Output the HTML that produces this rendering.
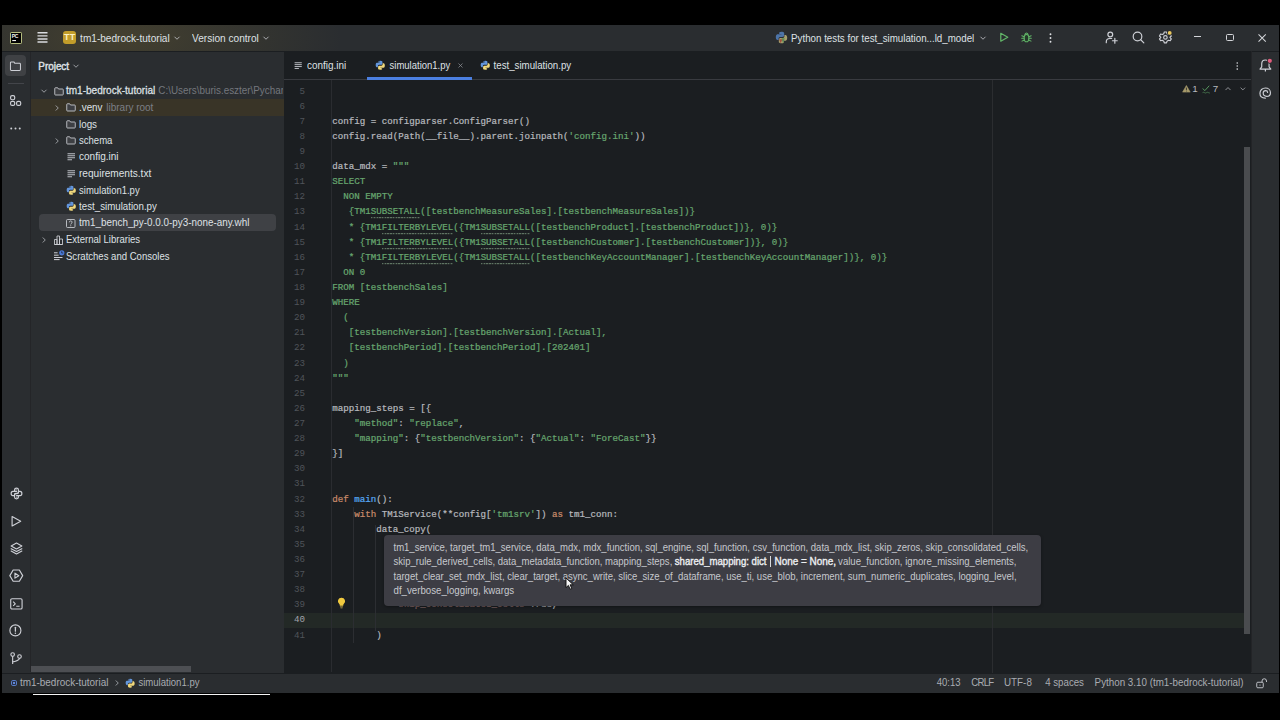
<!DOCTYPE html>
<html><head><meta charset="utf-8">
<style>
*{margin:0;padding:0;box-sizing:border-box}
html,body{width:1280px;height:720px;overflow:hidden;background:#000}
body{position:relative;font-family:"Liberation Sans",sans-serif;font-size:9.8px;color:#dfe1e5}
.a{position:absolute}
.t{position:absolute;white-space:nowrap;line-height:12px}
.cl{position:absolute;left:332.25px;height:15px;line-height:15px;white-space:pre;font-family:"Liberation Mono",monospace;font-size:9.17px;color:#b6b8bd;transform:scaleY(1.06);transform-origin:0 11px;-webkit-text-stroke:0.22px currentColor}
.ln{position:absolute;left:285px;width:20px;text-align:right;height:15px;line-height:15px;font-family:"Liberation Mono",monospace;font-size:9.17px}
.wv{color:#67a66f;padding-bottom:1.6px;background:repeating-linear-gradient(90deg,rgba(130,160,132,.75) 0 1.4px,rgba(130,160,132,.3) 1.4px 2.75px) left bottom/100% 1.2px no-repeat}
.rt{position:absolute;line-height:16.5px;white-space:nowrap;font-size:9.8px;color:#dfe1e5}
svg{position:absolute;overflow:visible}
.sb{position:absolute;top:673px;line-height:19px;white-space:nowrap;font-size:9.8px;color:#a9acb2}
.tp{position:absolute;left:394px;white-space:nowrap;font-size:9.5px;line-height:14.5px;color:#c4c6cc}
</style></head><body>
<!-- window -->
<div class="a" style="left:2px;top:25px;width:1277px;height:668px;background:#2a2d30"></div>
<!-- title bar gradient -->
<div class="a" style="left:2px;top:25px;width:600px;height:26px;background:radial-gradient(ellipse 220px 80px at 120px 13px, rgba(150,125,45,0.24), rgba(150,125,45,0.10) 55%, rgba(150,125,45,0) 100%)"></div>
<!-- left strip border -->
<div class="a" style="left:29.5px;top:51px;width:1px;height:621px;background:#242528"></div>
<!-- title bar bottom border -->
<div class="a" style="left:2px;top:50.5px;width:1277px;height:1px;background:#1b1e21"></div>
<!-- editor -->
<div class="a" style="left:284px;top:51px;width:967px;height:621.5px;background:#1b1e21"></div>
<!-- right strip border -->
<div class="a" style="left:1250.5px;top:51px;width:1px;height:621px;background:#232427"></div>
<!-- tab bar bottom border -->
<div class="a" style="left:284px;top:79px;width:966.5px;height:1px;background:#393b40"></div>
<!-- status bar top border -->
<div class="a" style="left:2px;top:672.5px;width:1277px;height:0.5px;background:#1b1e21"></div>

<!-- ===== TITLE BAR ===== -->
<svg style="left:9.8px;top:31.6px" width="12" height="12" viewBox="0 0 24 24"><rect x="1" y="1" width="22" height="22" rx="1.5" fill="#000" stroke="#c8d18c" stroke-width="1.8"/><text x="3.6" y="11.2" font-family="Liberation Sans" font-weight="bold" font-size="10" letter-spacing="-0.6" fill="#f2f2f2">PC</text><rect x="4.5" y="16" width="7.5" height="2.2" fill="#f2f2f2"/></svg>
<svg style="left:37px;top:32px" width="11" height="11" viewBox="0 0 22 22"><path d="M1 1.6H21M1 7.7H21M1 13.8H21M1 19.9H21" stroke="#dadcdf" stroke-width="2.9"/></svg>
<div class="a" style="left:62.8px;top:30.5px;width:13.6px;height:13.6px;border-radius:3px;background:#c29d2a"></div>
<div class="t" style="left:63px;top:31.3px;width:13.5px;text-align:center;font-size:8.8px;font-weight:bold;color:#fbf0c4;line-height:12px;letter-spacing:0.3px">TT</div>
<div class="t" style="left:80.10px;top:31.70px;line-height:14px;font-size:10.088px;color:#dfe1e5;transform:scaleY(1.06);transform-origin:0 10.50px;">tm1-bedrock-tutorial</div>
<svg style="left:173.5px;top:36px" width="6" height="4" viewBox="0 0 12 8"><path d="M1 1.5L6 6.5L11 1.5" fill="none" stroke="#c0c2c6" stroke-width="1.7"/></svg>
<div class="t" style="left:192.10px;top:31.70px;line-height:14px;font-size:10.099px;color:#dfe1e5;transform:scaleY(1.06);transform-origin:0 10.50px;">Version control</div>
<svg style="left:262.5px;top:36px" width="6" height="4" viewBox="0 0 12 8"><path d="M1 1.5L6 6.5L11 1.5" fill="none" stroke="#c0c2c6" stroke-width="1.7"/></svg>

<svg style="left:775px;top:31px" width="13" height="13" viewBox="0 0 16 16">
<path d="M7.9 1C5 1 5.2 2.3 5.2 2.3V3.7H8V4.1H3.4S1 3.8 1 7.5s2.1 3.6 2.1 3.6H4.4V9.4S4.3 7.3 6.5 7.3H9.2S11.3 7.3 11.3 5.3V2.9S11.6 1 7.9 1Z" fill="#4d74a8"/>
<path d="M8.1 15C11 15 10.8 13.7 10.8 13.7V12.3H8V11.9H12.6S15 12.2 15 8.5S12.9 4.9 12.9 4.9H11.6V6.6S11.7 8.7 9.5 8.7H6.8S4.7 8.7 4.7 10.7V13.1S4.4 15 8.1 15Z" fill="#a79f6e"/>
<path d="M8 9L10 15L12 9Z" fill="#5b8a55"/><path d="M5 10L7 15L9 10Z" fill="#a04f3b"/>
</svg>
<div class="t" style="left:791.10px;top:31.82px;line-height:14px;font-size:9.752px;color:#dfe1e5;transform:scaleY(1.06);transform-origin:0 10.38px;">Python tests for test_simulation...ld_model</div>
<svg style="left:979.5px;top:36px" width="6" height="4" viewBox="0 0 12 8"><path d="M1 1.5L6 6.5L11 1.5" fill="none" stroke="#c0c2c6" stroke-width="1.7"/></svg>
<svg style="left:999px;top:32.2px" width="10" height="10.5" viewBox="0 0 14 15"><path d="M2.4 1.9V13.1L12.4 7.5Z" fill="none" stroke="#62b568" stroke-width="1.75" stroke-linejoin="round"/></svg>
<svg style="left:1021.2px;top:31.8px" width="11" height="10.8" viewBox="0 0 16 15.7"><g fill="none" stroke="#62b568" stroke-width="1.5" stroke-linecap="round"><path d="M8 3.6C5.9 3.6 4.6 5.3 4.6 8.6C4.6 12 6 14.3 8 14.3C10 14.3 11.4 12 11.4 8.6C11.4 5.3 10.1 3.6 8 3.6Z" fill="#24382a"/><path d="M5.6 4.3C5.8 2.3 6.7 1.3 8 1.3C9.3 1.3 10.2 2.3 10.4 4.3"/><path d="M1.2 5.4L4.6 6.8M1 9.2H4.6M1.4 13.3L4.9 11.6M14.8 5.4L11.4 6.8M15 9.2H11.4M14.6 13.3L11.1 11.6"/></g></svg>
<svg style="left:1049px;top:32.5px" width="3" height="10" viewBox="0 0 3 10"><circle cx="1.5" cy="1.3" r="0.95" fill="#dfe1e5"/><circle cx="1.5" cy="5" r="0.95" fill="#dfe1e5"/><circle cx="1.5" cy="8.7" r="0.95" fill="#dfe1e5"/></svg>

<svg style="left:1104.6px;top:31px" width="12.8" height="12.8" viewBox="0 0 16 16"><g fill="none" stroke="#ced0d6" stroke-width="1.5" stroke-linecap="round"><circle cx="6.6" cy="4.4" r="3"/><path d="M1.6 14.6V13.6C1.6 11 3.4 9.4 6 9.4H8.4"/><path d="M12.3 9.2V15.2M9.3 12.2H15.3"/></g></svg>
<svg style="left:1131.6px;top:31.4px" width="12.8" height="12.8" viewBox="0 0 16 16"><g fill="none" stroke="#ced0d6" stroke-width="1.5" stroke-linecap="round"><circle cx="6.9" cy="6.9" r="5.4"/><path d="M10.9 10.9L14.8 14.8"/></g></svg>
<svg style="left:1158.6px;top:31px" width="12.8" height="12.8" viewBox="0 0 16 16"><g fill="none" stroke="#ced0d6" stroke-width="1.45" stroke-linejoin="round"><path d="M6.6 1.2H9.4L10 3.3L11.9 4.4L14 3.8L15.4 6.2L13.8 7.7V8.3L15.4 9.8L14 12.2L11.9 11.6L10 12.7L9.4 14.8H6.6L6 12.7L4.1 11.6L2 12.2L0.6 9.8L2.2 8.3V7.7L0.6 6.2L2 3.8L4.1 4.4L6 3.3Z"/><circle cx="8" cy="8" r="2.2"/></g><circle cx="13.4" cy="2.4" r="3.3" fill="#2b2d30"/><circle cx="13.4" cy="2.4" r="2.4" fill="#e9c75d"/></svg>
<div class="a" style="left:1194px;top:36.4px;width:7.2px;height:1.1px;background:#d3d5d9"></div>
<div class="a" style="left:1226px;top:34px;width:7.8px;height:7.2px;border:1.3px solid #d3d5d9;border-radius:1.5px"></div>
<svg style="left:1258px;top:33.6px" width="8.3" height="7.8" viewBox="0 0 16 15"><path d="M1 0.5L15 14.5M15 0.5L1 14.5" stroke="#d3d5d9" stroke-width="2"/></svg>

<!-- ===== LEFT STRIP ===== -->
<div class="a" style="left:5.3px;top:55.3px;width:20.7px;height:20.7px;border-radius:4px;background:#3f4144"></div>
<svg style="left:9.4px;top:60.6px" width="12.9" height="10" viewBox="0 0 20 17"><path d="M1.5 3V14.5A1.5 1.5 0 0 0 3 16H17A1.5 1.5 0 0 0 18.5 14.5V5.5A1.5 1.5 0 0 0 17 4H9L7.3 1.5H3A1.5 1.5 0 0 0 1.5 3Z" fill="#3d3f43" stroke="#ced0d6" stroke-width="1.7" stroke-linejoin="round"/></svg>
<div class="a" style="left:8px;top:82.6px;width:15.7px;height:1px;background:#43454a"></div>
<svg style="left:10px;top:95px" width="11.5" height="11" viewBox="0 0 23 22"><rect x="1.2" y="1.2" width="8.2" height="8.2" rx="3" fill="none" stroke="#ced0d6" stroke-width="2.3"/><rect x="1.2" y="12.6" width="8.2" height="8.2" rx="3" fill="none" stroke="#ced0d6" stroke-width="2.3"/><rect x="13.2" y="12.6" width="8.2" height="8.2" rx="3" fill="none" stroke="#ced0d6" stroke-width="2.3"/></svg>
<svg style="left:10.2px;top:126.8px" width="11" height="3" viewBox="0 0 22 6"><circle cx="2.5" cy="3" r="2" fill="#ced0d6"/><circle cx="11" cy="3" r="2" fill="#ced0d6"/><circle cx="19.5" cy="3" r="2" fill="#ced0d6"/></svg>

<svg style="left:9.5px;top:487.2px" width="13" height="13" viewBox="0 0 16 16"><g fill="none" stroke="#ced0d6" stroke-width="1.45" stroke-linejoin="round" stroke-linecap="round"><path d="M5.6 5.4V3.6Q5.6 1.4 8 1.4Q10.4 1.4 10.4 3.6V6.4Q10.4 7.9 8.9 7.9H7.1Q5.6 7.9 5.6 9.4V10.6H3.6Q1.4 10.6 1.4 8Q1.4 5.4 3.6 5.4H8"/><path d="M10.4 10.6V12.4Q10.4 14.6 8 14.6Q5.6 14.6 5.6 12.4V9.6Q5.6 8.1 7.1 8.1H8.9Q10.4 8.1 10.4 6.6V5.4H12.4Q14.6 5.4 14.6 8Q14.6 10.6 12.4 10.6H8"/></g><circle cx="7.6" cy="3.5" r="0.8" fill="#ced0d6"/><circle cx="8.4" cy="12.5" r="0.8" fill="#ced0d6"/></svg>
<svg style="left:10px;top:515px" width="12" height="12.5" viewBox="0 0 15 16"><path d="M2.5 2V14L13.5 8Z" fill="none" stroke="#ced0d6" stroke-width="1.45" stroke-linejoin="round"/></svg>
<svg style="left:9.5px;top:542.2px" width="13" height="13" viewBox="0 0 16 16"><g fill="none" stroke="#ced0d6" stroke-width="1.35" stroke-linejoin="round" stroke-linecap="round"><path d="M8 1.3L14.6 5L8 8.7L1.4 5Z"/><path d="M1.4 8.2L8 11.8L14.6 8.2"/><path d="M1.4 11.2L8 14.8L14.6 11.2"/></g></svg>
<svg style="left:8.6px;top:569.4px" width="14.5" height="13.3" viewBox="0 0 17.5 16"><g fill="none" stroke="#ced0d6" stroke-width="1.4" stroke-linejoin="round"><path d="M5 1.2H12.5L16.5 8L12.5 14.8H5L1 8Z"/><path d="M7.2 5V11L11.8 8Z"/></g></svg>
<svg style="left:9.5px;top:597.6px" width="12.8" height="11.8" viewBox="0 0 16 14.7"><g fill="none" stroke="#ced0d6" stroke-width="1.4" stroke-linejoin="round"><rect x="0.9" y="0.9" width="14.2" height="12.9" rx="1.6"/><path d="M4 4.6L6.6 7.2L4 9.8M7.8 10.3H12"/></g></svg>
<svg style="left:9.4px;top:624.4px" width="12.8" height="12.8" viewBox="0 0 16 16"><circle cx="8" cy="8" r="6.9" fill="none" stroke="#ced0d6" stroke-width="1.4"/><path d="M8 4.2V9" stroke="#ced0d6" stroke-width="1.6" stroke-linecap="round"/><circle cx="8" cy="11.5" r="0.95" fill="#ced0d6"/></svg>
<svg style="left:9.5px;top:652px" width="12" height="12.5" viewBox="0 0 15.4 16"><g fill="none" stroke="#ced0d6" stroke-width="1.45"><circle cx="3.4" cy="3.3" r="2.3"/><circle cx="12.2" cy="5.8" r="2.3"/><path d="M3.4 5.6V15.5M12.2 8.1C12.2 11 8 11.5 3.4 13"/></g></svg>

<!-- ===== PROJECT PANEL ===== -->
<div class="t" style="left:38.35px;top:60.08px;line-height:14px;font-size:9.864px;color:#dfe1e5;transform:scaleY(1.06);transform-origin:0 10.42px;-webkit-text-stroke:0.4px currentColor;">Project</div>
<svg style="left:73px;top:64.2px" width="6" height="4" viewBox="0 0 12 8"><path d="M1 1.5L6 6.5L11 1.5" fill="none" stroke="#aeb0b5" stroke-width="1.7"/></svg>
<div class="a" style="left:31px;top:99.25px;width:253px;height:16.5px;background:#393427"></div><div class="a" style="left:39px;top:214.25px;width:237px;height:16.5px;border-radius:4px;background:#3f4145"></div><svg style="left:41.3px;top:89.0px" width="6" height="4" viewBox="0 0 12 8"><path d="M1 1.5L6 6.5L11 1.5" fill="none" stroke="#aeb0b5" stroke-width="1.7"/></svg><svg style="left:53.5px;top:86.75px" width="10" height="8.5" viewBox="0 0 20 17"><path d="M1.5 3V14.5A1.5 1.5 0 0 0 3 16H17A1.5 1.5 0 0 0 18.5 14.5V5.5A1.5 1.5 0 0 0 17 4H9L7.3 1.5H3A1.5 1.5 0 0 0 1.5 3Z" fill="#3d3f43" stroke="#ced0d6" stroke-width="1.7" stroke-linejoin="round"/></svg><div class="t" style="left:65.90px;top:84.41px;line-height:14px;font-size:10.06px;color:#dfe1e5;transform:scaleY(1.06);transform-origin:0 10.49px;-webkit-text-stroke:0.25px currentColor;">tm1-bedrock-tutorial</div><div class="t" style="left:158.35px;top:84.47px;line-height:14px;font-size:9.9px;color:#74777d;transform:scaleY(1.06);transform-origin:0 10.43px;max-width:125px;overflow:hidden;">C:\Users\buris.eszter\PycharmProjects\tm1-bedrock-tutorial</div><svg style="left:55px;top:104.5px" width="4" height="6" viewBox="0 0 8 12"><path d="M1.5 1L6.5 6L1.5 11" fill="none" stroke="#aeb0b5" stroke-width="1.7"/></svg><svg style="left:66.3px;top:103.25px" width="10" height="8.5" viewBox="0 0 20 17"><path d="M1.5 3V14.5A1.5 1.5 0 0 0 3 16H17A1.5 1.5 0 0 0 18.5 14.5V5.5A1.5 1.5 0 0 0 17 4H9L7.3 1.5H3A1.5 1.5 0 0 0 1.5 3Z" fill="#3d3f43" stroke="#ced0d6" stroke-width="1.7" stroke-linejoin="round"/></svg><div class="t" style="left:79.00px;top:100.99px;line-height:14px;font-size:9.833px;color:#dfe1e5;transform:scaleY(1.06);transform-origin:0 10.41px;">.venv</div><div class="t" style="left:106.30px;top:100.94px;line-height:14px;font-size:9.972px;color:#7c7f86;transform:scaleY(1.06);transform-origin:0 10.46px;">library root</div><svg style="left:66.3px;top:119.75px" width="10" height="8.5" viewBox="0 0 20 17"><path d="M1.5 3V14.5A1.5 1.5 0 0 0 3 16H17A1.5 1.5 0 0 0 18.5 14.5V5.5A1.5 1.5 0 0 0 17 4H9L7.3 1.5H3A1.5 1.5 0 0 0 1.5 3Z" fill="#3d3f43" stroke="#ced0d6" stroke-width="1.7" stroke-linejoin="round"/></svg><div class="t" style="left:79.00px;top:117.50px;line-height:14px;font-size:9.813px;color:#dfe1e5;transform:scaleY(1.06);transform-origin:0 10.40px;">logs</div><svg style="left:55px;top:137.5px" width="4" height="6" viewBox="0 0 8 12"><path d="M1.5 1L6.5 6L1.5 11" fill="none" stroke="#aeb0b5" stroke-width="1.7"/></svg><svg style="left:66.3px;top:136.25px" width="10" height="8.5" viewBox="0 0 20 17"><path d="M1.5 3V14.5A1.5 1.5 0 0 0 3 16H17A1.5 1.5 0 0 0 18.5 14.5V5.5A1.5 1.5 0 0 0 17 4H9L7.3 1.5H3A1.5 1.5 0 0 0 1.5 3Z" fill="#3d3f43" stroke="#ced0d6" stroke-width="1.7" stroke-linejoin="round"/></svg><div class="t" style="left:79.00px;top:134.08px;line-height:14px;font-size:9.568px;color:#dfe1e5;transform:scaleY(1.06);transform-origin:0 10.32px;">schema</div><svg style="left:66.8px;top:153.25px" width="8.5" height="7.5" viewBox="0 0 17 15"><g stroke="#ced0d6" stroke-width="1.8"><path d="M1 1.5H16M1 5.5H16M1 9.5H16M1 13.5H10"/></g></svg><div class="t" style="left:79.00px;top:150.42px;line-height:14px;font-size:10.034px;color:#dfe1e5;transform:scaleY(1.06);transform-origin:0 10.48px;">config.ini</div><svg style="left:66.8px;top:169.75px" width="8.5" height="7.5" viewBox="0 0 17 15"><g stroke="#ced0d6" stroke-width="1.8"><path d="M1 1.5H16M1 5.5H16M1 9.5H16M1 13.5H10"/></g></svg><div class="t" style="left:79.00px;top:166.90px;line-height:14px;font-size:10.099px;color:#dfe1e5;transform:scaleY(1.06);transform-origin:0 10.50px;">requirements.txt</div><svg style="left:66.1px;top:184.75px" width="10.5" height="10.5" viewBox="0 0 16 16">
<path d="M7.9 1C5 1 5.2 2.3 5.2 2.3V3.7H8V4.1H3.4S1 3.8 1 7.5s2.1 3.6 2.1 3.6H4.4V9.4S4.3 7.3 6.5 7.3H9.2S11.3 7.3 11.3 5.300V2.9S11.6 1 7.9 1ZM6.4 2A.55.55 0 1 1 6.4 3.1A.55.55 0 1 1 6.4 2Z" fill="#6396dc"/>
<path d="M8.1 15C11 15 10.8 13.7 10.8 13.7V12.3H8V11.9H12.6S15 12.2 15 8.5S12.9 4.9 12.9 4.9H11.6V6.6S11.7 8.7 9.5 8.7H6.8S4.7 8.7 4.7 10.700V13.1S4.4 15 8.1 15ZM9.6 14A.55.55 0 1 1 9.6 12.9A.55.55 0 1 1 9.6 14Z" fill="#f0d87c"/>
</svg><div class="t" style="left:79.10px;top:183.61px;line-height:14px;font-size:9.481px;color:#dfe1e5;transform:scaleY(1.06);transform-origin:0 10.29px;">simulation1.py</div><svg style="left:66.1px;top:201.25px" width="10.5" height="10.5" viewBox="0 0 16 16">
<path d="M7.9 1C5 1 5.2 2.3 5.2 2.3V3.7H8V4.1H3.4S1 3.8 1 7.5s2.1 3.6 2.1 3.6H4.4V9.4S4.3 7.3 6.5 7.3H9.2S11.3 7.3 11.3 5.300V2.9S11.6 1 7.9 1ZM6.4 2A.55.55 0 1 1 6.4 3.1A.55.55 0 1 1 6.4 2Z" fill="#6396dc"/>
<path d="M8.1 15C11 15 10.8 13.7 10.8 13.7V12.3H8V11.9H12.6S15 12.2 15 8.5S12.9 4.9 12.9 4.9H11.6V6.6S11.7 8.7 9.5 8.7H6.8S4.7 8.7 4.7 10.700V13.1S4.4 15 8.1 15ZM9.6 14A.55.55 0 1 1 9.6 12.9A.55.55 0 1 1 9.6 14Z" fill="#f0d87c"/>
</svg><div class="t" style="left:79.10px;top:200.03px;line-height:14px;font-size:9.721px;color:#dfe1e5;transform:scaleY(1.06);transform-origin:0 10.37px;">test_simulation.py</div><svg style="left:66.3px;top:218.5px" width="9.5" height="9" viewBox="0 0 19 18"><rect x="1" y="1" width="17" height="16" rx="2" fill="none" stroke="#ced0d6" stroke-width="1.7"/><path d="M6.8 6.6A2.7 2.7 0 1 1 10.5 9C9.7 9.4 9.5 9.9 9.5 10.8" fill="none" stroke="#ced0d6" stroke-width="1.7"/><circle cx="9.5" cy="13.4" r="1.1" fill="#ced0d6"/></svg><div class="t" style="left:79.10px;top:216.48px;line-height:14px;font-size:9.856px;color:#dfe1e5;transform:scaleY(1.06);transform-origin:0 10.42px;">tm1_bench_py-0.0.0-py3-none-any.whl</div><svg style="left:42px;top:236.5px" width="4" height="6" viewBox="0 0 8 12"><path d="M1.5 1L6.5 6L1.5 11" fill="none" stroke="#aeb0b5" stroke-width="1.7"/></svg><svg style="left:54.0px;top:234.5px" width="9.5" height="10" viewBox="0 0 19 20"><path d="M1 19V9H6V19ZM6 19V2H11V19ZM11 19V8H17V19ZM1 19H17" fill="none" stroke="#ced0d6" stroke-width="1.7" stroke-linejoin="round"/></svg><div class="t" style="left:66.00px;top:233.10px;line-height:14px;font-size:9.536px;color:#dfe1e5;transform:scaleY(1.06);transform-origin:0 10.30px;">External Libraries</div><svg style="left:54px;top:249px" width="11" height="11" viewBox="0 0 11 11"><path d="M0 3.8H3.6M0 6.2H4.6M0 8.5H8.5M0 10.6H5.6" stroke="#ced0d6" stroke-width="1"/><circle cx="7.8" cy="3.8" r="3.1" fill="#2b2d30"/><circle cx="7.8" cy="3.8" r="2.6" fill="#4a7ad8"/><path d="M7.7 2.3V4H9.2" fill="none" stroke="#1e2a45" stroke-width="0.8"/></svg><div class="t" style="left:66.00px;top:249.58px;line-height:14px;font-size:9.568px;color:#dfe1e5;transform:scaleY(1.06);transform-origin:0 10.32px;">Scratches and Consoles</div>
<!-- h scrollbar -->
<div class="a" style="left:31px;top:665.8px;width:160px;height:5.8px;background:#4d4f53;border-radius:0"></div>

<!-- ===== TABS ===== -->
<svg style="left:294px;top:61.8px" width="8.4" height="7.2" viewBox="0 0 17 15"><g stroke="#ced0d6" stroke-width="1.8"><path d="M1 1.5H16M1 5.5H16M1 9.5H16M1 13.5H10"/></g></svg>
<div class="t" style="left:307.10px;top:58.96px;line-height:14px;font-size:9.933px;color:#dfe1e5;transform:scaleY(1.06);transform-origin:0 10.44px;">config.ini</div>
<svg style="left:375.3px;top:60.2px" width="10.5" height="10.5" viewBox="0 0 16 16">
<path d="M7.9 1C5 1 5.2 2.3 5.2 2.3V3.7H8V4.1H3.4S1 3.8 1 7.5s2.1 3.6 2.1 3.6H4.4V9.4S4.3 7.3 6.5 7.3H9.2S11.3 7.3 11.3 5.300V2.9S11.6 1 7.9 1ZM6.4 2A.55.55 0 1 1 6.4 3.1A.55.55 0 1 1 6.4 2Z" fill="#6396dc"/>
<path d="M8.1 15C11 15 10.8 13.7 10.8 13.7V12.3H8V11.9H12.6S15 12.2 15 8.5S12.9 4.9 12.9 4.9H11.6V6.6S11.7 8.7 9.5 8.7H6.8S4.7 8.7 4.7 10.700V13.1S4.4 15 8.1 15ZM9.6 14A.55.55 0 1 1 9.6 12.9A.55.55 0 1 1 9.6 14Z" fill="#f0d87c"/>
</svg>
<div class="t" style="left:389.60px;top:59.11px;line-height:14px;font-size:9.497px;color:#dfe1e5;transform:scaleY(1.06);transform-origin:0 10.29px;">simulation1.py</div>
<svg style="left:458.4px;top:63.2px" width="5" height="5" viewBox="0 0 10 10"><path d="M1 1L9 9M9 1L1 9" stroke="#8c8f94" stroke-width="1.5"/></svg>
<div class="a" style="left:367px;top:77px;width:105px;height:3px;background:#4b7fe0"></div>
<svg style="left:480px;top:60.2px" width="10.5" height="10.5" viewBox="0 0 16 16">
<path d="M7.9 1C5 1 5.2 2.3 5.2 2.3V3.7H8V4.1H3.4S1 3.8 1 7.5s2.1 3.6 2.1 3.6H4.4V9.4S4.3 7.3 6.5 7.3H9.2S11.3 7.3 11.3 5.300V2.9S11.6 1 7.9 1ZM6.4 2A.55.55 0 1 1 6.4 3.1A.55.55 0 1 1 6.4 2Z" fill="#6396dc"/>
<path d="M8.1 15C11 15 10.8 13.7 10.8 13.7V12.3H8V11.9H12.6S15 12.2 15 8.5S12.9 4.9 12.9 4.9H11.6V6.6S11.7 8.7 9.5 8.7H6.8S4.7 8.7 4.7 10.700V13.1S4.4 15 8.1 15ZM9.6 14A.55.55 0 1 1 9.6 12.9A.55.55 0 1 1 9.6 14Z" fill="#f0d87c"/>
</svg>
<div class="t" style="left:493.60px;top:59.04px;line-height:14px;font-size:9.696px;color:#dfe1e5;transform:scaleY(1.06);transform-origin:0 10.36px;">test_simulation.py</div>
<svg style="left:1236.3px;top:60.8px" width="2.5" height="10" viewBox="0 0 3 10"><circle cx="1.5" cy="1.3" r="0.95" fill="#dfe1e5"/><circle cx="1.5" cy="5" r="0.95" fill="#dfe1e5"/><circle cx="1.5" cy="8.7" r="0.95" fill="#dfe1e5"/></svg>

<!-- ===== EDITOR ===== -->
<div class="a" style="left:284px;top:612.75px;width:960px;height:15px;background:#232926"></div>
<div class="a" style="left:330.5px;top:80px;width:1px;height:592px;background:#2a2c30"></div>
<div class="a" style="left:353px;top:506.68px;width:1px;height:135.99px;background:#2c2e32"></div>
<div class="a" style="left:375px;top:524.79px;width:1px;height:105.77px;background:#2c2e32"></div>
<div class="a" style="left:992px;top:80px;width:1px;height:592.5px;background:#2b2d30"></div>
<!-- inspections widget -->
<svg style="left:1182px;top:85px" width="8.8" height="7.6" viewBox="0 0 18 16"><path d="M9 1L17 15H1Z" fill="#a5996a" stroke="#a5996a" stroke-width="1.2" stroke-linejoin="round"/><path d="M9 5.5V10.5" stroke="#1e1f22" stroke-width="1.7"/><circle cx="9" cy="12.7" r="0.9" fill="#1e1f22"/></svg>
<div class="t" style="left:1192.3px;top:83px;font-size:9.8px;color:#b7b9be">1</div>
<svg style="left:1202.2px;top:85px" width="8" height="8.4" viewBox="0 0 16 17"><path d="M1.5 7L5.5 11.5L14.5 1.5" fill="none" stroke="#5b9f62" stroke-width="1.9"/><path d="M1 15.5Q3 14 5 15.5T9 15.5T13 15.5T16 15.5" fill="none" stroke="#5b9f62" stroke-width="1.2"/></svg>
<div class="t" style="left:1212.8px;top:83px;font-size:9.8px;color:#b7b9be">7</div>
<svg style="left:1225px;top:87px" width="6" height="3.6" viewBox="0 0 12 7"><path d="M1 6L6 1L11 6" fill="none" stroke="#aeb0b5" stroke-width="1.6"/></svg>
<svg style="left:1239.6px;top:87px" width="5.7" height="3.6" viewBox="0 0 12 8"><path d="M1 1.5L6 6.5L11 1.5" fill="none" stroke="#aeb0b5" stroke-width="1.7"/></svg>
<!-- v scrollbar -->
<div class="a" style="left:1244px;top:146.7px;width:6px;height:487px;background:#4a4c4f"></div>

<div class="ln" style="top:83.60px;color:#50545a">5</div><div class="ln" style="top:98.71px;color:#50545a">6</div><div class="ln" style="top:113.82px;color:#50545a">7</div><div class="ln" style="top:128.93px;color:#50545a">8</div><div class="ln" style="top:144.04px;color:#50545a">9</div><div class="ln" style="top:159.15px;color:#50545a">10</div><div class="ln" style="top:174.26px;color:#50545a">11</div><div class="ln" style="top:189.37px;color:#50545a">12</div><div class="ln" style="top:204.48px;color:#50545a">13</div><div class="ln" style="top:219.59px;color:#50545a">14</div><div class="ln" style="top:234.70px;color:#50545a">15</div><div class="ln" style="top:249.81px;color:#50545a">16</div><div class="ln" style="top:264.92px;color:#50545a">17</div><div class="ln" style="top:280.03px;color:#50545a">18</div><div class="ln" style="top:295.14px;color:#50545a">19</div><div class="ln" style="top:310.25px;color:#50545a">20</div><div class="ln" style="top:325.36px;color:#50545a">21</div><div class="ln" style="top:340.47px;color:#50545a">22</div><div class="ln" style="top:355.58px;color:#50545a">23</div><div class="ln" style="top:370.69px;color:#50545a">24</div><div class="ln" style="top:385.80px;color:#50545a">25</div><div class="ln" style="top:400.91px;color:#50545a">26</div><div class="ln" style="top:416.02px;color:#50545a">27</div><div class="ln" style="top:431.13px;color:#50545a">28</div><div class="ln" style="top:446.24px;color:#50545a">29</div><div class="ln" style="top:461.35px;color:#50545a">30</div><div class="ln" style="top:476.46px;color:#50545a">31</div><div class="ln" style="top:491.57px;color:#50545a">32</div><div class="ln" style="top:506.68px;color:#50545a">33</div><div class="ln" style="top:521.79px;color:#50545a">34</div><div class="ln" style="top:536.90px;color:#50545a">35</div><div class="ln" style="top:552.01px;color:#50545a">36</div><div class="ln" style="top:567.12px;color:#50545a">37</div><div class="ln" style="top:582.23px;color:#50545a">38</div><div class="ln" style="top:597.34px;color:#50545a">39</div><div class="ln" style="top:612.45px;color:#a1a3ab">40</div><div class="ln" style="top:627.56px;color:#50545a">41</div>
<div class="cl" style="top:113.82px">config = configparser.ConfigParser()</div><div class="cl" style="top:128.93px">config.read(Path(__file__).parent.joinpath(<span style="color:#67a66f">&#x27;config.ini&#x27;</span>))</div><div class="cl" style="top:159.15px">data_mdx = <span style="color:#67a66f">&quot;&quot;&quot;</span></div><div class="cl" style="top:174.26px"><span style="color:#67a66f">SELECT</span></div><div class="cl" style="top:189.37px"><span style="color:#67a66f">  NON EMPTY</span></div><div class="cl" style="top:204.48px"><span style="color:#67a66f">   {</span><span style="color:#67a66f">TM1</span><span class="wv">SUBSETALL</span><span style="color:#67a66f">([testbenchMeasureSales].[testbenchMeasureSales])}</span></div><div class="cl" style="top:219.59px"><span style="color:#67a66f">   * {</span><span style="color:#67a66f">TM1</span><span class="wv">FILTERBYLEVEL</span><span style="color:#67a66f">({</span><span style="color:#67a66f">TM1</span><span class="wv">SUBSETALL</span><span style="color:#67a66f">([testbenchProduct].[testbenchProduct])}, 0)}</span></div><div class="cl" style="top:234.70px"><span style="color:#67a66f">   * {</span><span style="color:#67a66f">TM1</span><span class="wv">FILTERBYLEVEL</span><span style="color:#67a66f">({</span><span style="color:#67a66f">TM1</span><span class="wv">SUBSETALL</span><span style="color:#67a66f">([testbenchCustomer].[testbenchCustomer])}, 0)}</span></div><div class="cl" style="top:249.81px"><span style="color:#67a66f">   * {</span><span style="color:#67a66f">TM1</span><span class="wv">FILTERBYLEVEL</span><span style="color:#67a66f">({</span><span style="color:#67a66f">TM1</span><span class="wv">SUBSETALL</span><span style="color:#67a66f">([testbenchKeyAccountManager].[testbenchKeyAccountManager])}, 0)}</span></div><div class="cl" style="top:264.92px"><span style="color:#67a66f">  ON 0</span></div><div class="cl" style="top:280.03px"><span style="color:#67a66f">FROM [testbenchSales]</span></div><div class="cl" style="top:295.14px"><span style="color:#67a66f">WHERE</span></div><div class="cl" style="top:310.25px"><span style="color:#67a66f">  (</span></div><div class="cl" style="top:325.36px"><span style="color:#67a66f">   [testbenchVersion].[testbenchVersion].[Actual],</span></div><div class="cl" style="top:340.47px"><span style="color:#67a66f">   [testbenchPeriod].[testbenchPeriod].[202401]</span></div><div class="cl" style="top:355.58px"><span style="color:#67a66f">  )</span></div><div class="cl" style="top:370.69px"><span style="color:#67a66f">&quot;&quot;&quot;</span></div><div class="cl" style="top:400.91px">mapping_steps = [{</div><div class="cl" style="top:416.02px">    <span style="color:#67a66f">&quot;method&quot;</span>: <span style="color:#67a66f">&quot;replace&quot;</span>,</div><div class="cl" style="top:431.13px">    <span style="color:#67a66f">&quot;mapping&quot;</span>: {<span style="color:#67a66f">&quot;testbenchVersion&quot;</span>: {<span style="color:#67a66f">&quot;Actual&quot;</span>: <span style="color:#67a66f">&quot;ForeCast&quot;</span>}}</div><div class="cl" style="top:446.24px">}]</div><div class="cl" style="top:491.57px"><span style="color:#c98b6b">def</span> <span style="color:#56a8f5">main</span>():</div><div class="cl" style="top:506.68px">    <span style="color:#c98b6b">with</span> TM1Service(**config[<span style="color:#67a66f">&#x27;tm1srv&#x27;</span>]) <span style="color:#c98b6b">as</span> tm1_conn:</div><div class="cl" style="top:521.79px">        data_copy(</div><div class="cl" style="top:597.34px">            <span style="color:#7d6262">skip_consolidated_cells=</span><span style="color:#a8a8ac">True</span>,</div><div class="cl" style="top:627.56px">        )</div>

<!-- lightbulb -->
<svg style="left:336.6px;top:596.5px" width="9" height="11.5" viewBox="0 0 18 23"><path d="M9 1.5A7 7 0 0 0 4.5 14C5.3 14.7 5.5 15.5 5.5 16.5V17.5H12.5V16.5C12.5 15.5 12.7 14.7 13.5 14A7 7 0 0 0 9 1.5Z" fill="#f0c93f"/><path d="M6 19.5H12M7 21.8H11" stroke="#c1a54c" stroke-width="1.5"/></svg>

<!-- tooltip -->
<div class="a" style="left:384px;top:535px;width:657px;height:70.5px;background:#3d3d44;border-radius:4px;box-shadow:0 1px 3px rgba(0,0,0,0.35)"></div>
<div class="t" style="left:393.50px;top:540.70px;line-height:14px;font-size:9.531px;color:#c6c8cd;transform:scaleY(1.06);transform-origin:0 10.30px;">tm1_service, target_tm1_service, data_mdx, mdx_function, sql_engine, sql_function, csv_function, data_mdx_list, skip_zeros, skip_consolidated_cells,</div>
<div class="t" style="left:393.50px;top:555.10px;line-height:14px;font-size:9.534px;color:#c6c8cd;transform:scaleY(1.06);transform-origin:0 10.30px;">skip_rule_derived_cells, data_metadata_function, mapping_steps,</div><div class="t" style="left:674.80px;top:555.07px;line-height:14px;font-size:9.602px;color:#eceef1;transform:scaleY(1.06);transform-origin:0 10.33px;-webkit-text-stroke:0.35px currentColor;">shared_mapping: dict</div><div class="a" style="left:770.3px;top:555.9px;width:1px;height:10.9px;background:#d8dadd"></div><div class="t" style="left:774.50px;top:554.95px;line-height:14px;font-size:9.954px;color:#eceef1;transform:scaleY(1.06);transform-origin:0 10.45px;-webkit-text-stroke:0.35px currentColor;">None = None,</div><div class="t" style="left:838.10px;top:555.08px;line-height:14px;font-size:9.586px;color:#c6c8cd;transform:scaleY(1.06);transform-origin:0 10.32px;">value_function, ignore_missing_elements,</div>
<div class="t" style="left:393.50px;top:569.50px;line-height:14px;font-size:9.532px;color:#c6c8cd;transform:scaleY(1.06);transform-origin:0 10.30px;">target_clear_set_mdx_list, clear_target, async_write, slice_size_of_dataframe, use_ti, use_blob, increment, sum_numeric_duplicates, logging_level,</div>
<div class="t" style="left:393.50px;top:583.94px;line-height:14px;font-size:9.694px;color:#c6c8cd;transform:scaleY(1.06);transform-origin:0 10.36px;">df_verbose_logging, kwargs</div>
<!-- mouse cursor -->
<svg style="left:564.6px;top:576.6px" width="9" height="13" viewBox="0 0 9 13"><path d="M1 1V10.6L3.4 8.4L5.1 12.2L6.8 11.5L5.1 7.8H8.3Z" fill="#f4f4f4" stroke="#0a0a0a" stroke-width="0.9" stroke-linejoin="round"/></svg>

<!-- ===== RIGHT STRIP ===== -->
<svg style="left:1258.6px;top:59.3px" width="12.8" height="13.2" viewBox="0 0 16 16.5"><path d="M8 1.3C5.2 1.3 3.4 3.5 3.4 6.2V9.8L1.2 12.6H14.8L12.6 9.8V6.2C12.6 3.5 10.8 1.3 8 1.3Z" fill="none" stroke="#ced0d6" stroke-width="1.45" stroke-linejoin="round"/><path d="M8 12.6V15.6" stroke="#ced0d6" stroke-width="1.5"/><circle cx="13.5" cy="2.3" r="3.6" fill="#2b2d30"/><circle cx="13.5" cy="2.3" r="2.6" fill="#e35d7d"/></svg>
<svg style="left:1258.8px;top:87px" width="12.4" height="12" viewBox="0 0 16 15.5"><path d="M8.2 14.4C4 14.4 1.2 11.9 1.2 8.1C1.2 4.1 4.3 1.3 8.3 1.3C12 1.3 14.8 3.8 14.8 7.3C14.8 10.3 12.6 12.1 10 12.1C7.3 12.1 5.4 10.3 5.4 7.9C5.4 5.9 6.8 4.6 8.6 4.6C10.1 4.6 11.1 5.6 11.1 7" fill="none" stroke="#ced0d6" stroke-width="1.5" stroke-linecap="round"/></svg>

<!-- ===== STATUS BAR ===== -->
<svg style="left:11.2px;top:680.3px" width="6" height="6" viewBox="0 0 12 12"><rect x="1" y="1" width="10" height="10" rx="2.5" fill="#27314a" stroke="#5f87d8" stroke-width="1.8"/><rect x="4" y="4" width="4" height="4" fill="#5f87d8"/></svg>
<div class="t" style="left:19.90px;top:676.35px;line-height:14px;font-size:9.965px;color:#a9acb2;transform:scaleY(1.06);transform-origin:0 10.45px;">tm1-bedrock-tutorial</div>
<svg style="left:114.6px;top:680.3px" width="4" height="6" viewBox="0 0 8 12"><path d="M1.5 1L6.5 6L1.5 11" fill="none" stroke="#a9acb2" stroke-width="1.7"/></svg>
<svg style="left:125.4px;top:678px" width="10.3" height="10.3" viewBox="0 0 16 16">
<path d="M7.9 1C5 1 5.2 2.3 5.2 2.3V3.7H8V4.1H3.4S1 3.8 1 7.5s2.1 3.6 2.1 3.6H4.4V9.4S4.3 7.3 6.5 7.3H9.2S11.3 7.3 11.3 5.300V2.9S11.6 1 7.9 1ZM6.4 2A.55.55 0 1 1 6.4 3.1A.55.55 0 1 1 6.4 2Z" fill="#6396dc"/>
<path d="M8.1 15C11 15 10.8 13.7 10.8 13.7V12.3H8V11.9H12.6S15 12.2 15 8.5S12.9 4.9 12.9 4.9H11.6V6.6S11.7 8.7 9.5 8.7H6.8S4.7 8.7 4.7 10.700V13.1S4.4 15 8.1 15ZM9.6 14A.55.55 0 1 1 9.6 12.9A.55.55 0 1 1 9.6 14Z" fill="#f0d87c"/>
</svg>
<div class="t" style="left:138.40px;top:676.48px;line-height:14px;font-size:9.575px;color:#a9acb2;transform:scaleY(1.06);transform-origin:0 10.32px;">simulation1.py</div>
<div class="t" style="left:936.80px;top:676.40px;line-height:14px;font-size:9.512px;color:#a9acb2;transform:scaleY(1.06);transform-origin:0 10.30px;">40:13</div>
<div class="t" style="left:971.20px;top:676.37px;line-height:14px;font-size:9.6px;color:#a9acb2;transform:scaleY(1.06);transform-origin:0 10.33px;letter-spacing:-0.7px;">CRLF</div>
<div class="t" style="left:1004.00px;top:676.29px;line-height:14px;font-size:9.849px;color:#a9acb2;transform:scaleY(1.06);transform-origin:0 10.41px;">UTF-8</div>
<div class="t" style="left:1045.20px;top:676.34px;line-height:14px;font-size:9.695px;color:#a9acb2;transform:scaleY(1.06);transform-origin:0 10.36px;">4 spaces</div>
<div class="t" style="left:1094.60px;top:676.29px;line-height:14px;font-size:9.827px;color:#a9acb2;transform:scaleY(1.06);transform-origin:0 10.41px;">Python 3.10 (tm1-bedrock-tutorial)</div>
<svg style="left:1256px;top:677.5px" width="11.5" height="10.5" viewBox="0 0 23 21"><rect x="1.5" y="8.5" width="13" height="11" rx="2" fill="none" stroke="#ced0d6" stroke-width="1.8"/><path d="M12 8.5V6A4.5 4.5 0 0 1 21 6V8" fill="none" stroke="#ced0d6" stroke-width="1.8"/><circle cx="8" cy="14" r="1.2" fill="#ced0d6"/></svg>

<!-- bottom white line -->
<div class="a" style="left:33px;top:693.5px;width:237px;height:1.5px;background:#f4f4f4"></div>
</body></html>
